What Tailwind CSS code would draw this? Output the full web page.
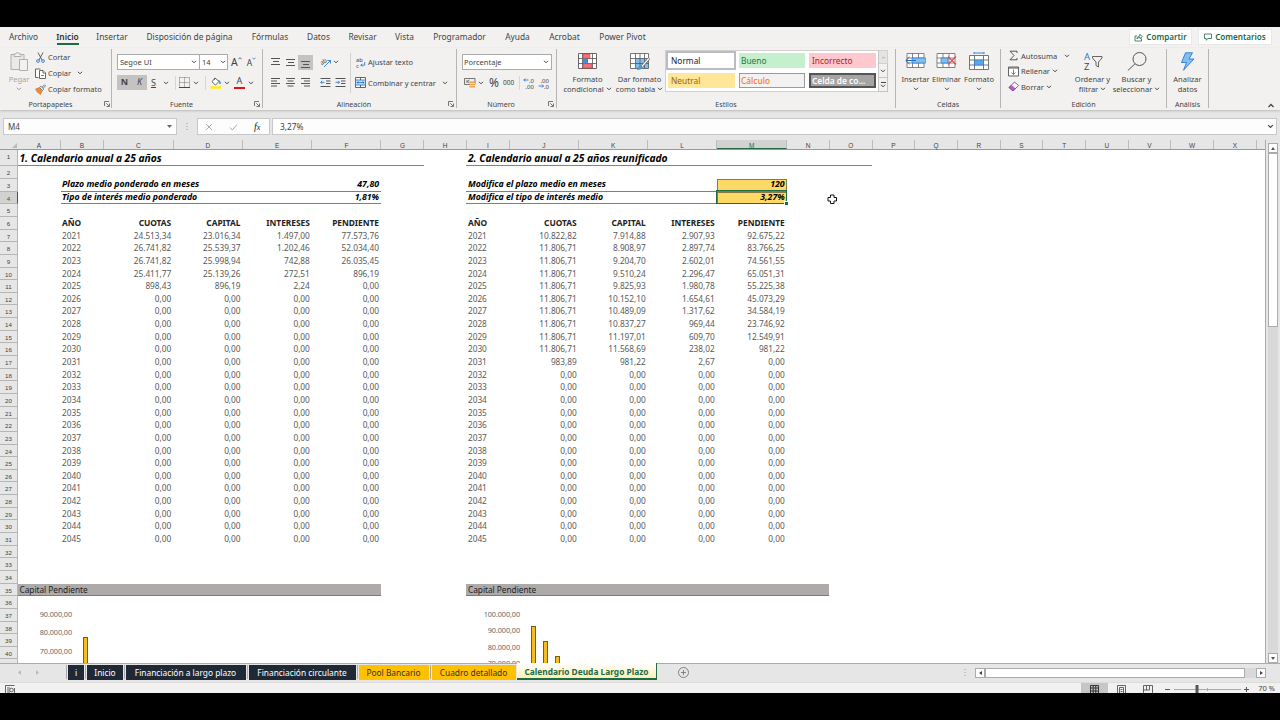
<!DOCTYPE html>
<html lang="es">
<head>
  <meta charset="UTF-8">
  <meta name="viewport" content="width=device-width, initial-scale=1.0">
  <title>Calendario Deuda Largo Plazo</title>
  <script src="https://cdn.jsdelivr.net/npm/@tailwindcss/browser@4"></script>
</head>
<body class="bg-black overflow-hidden">
<svg class="hidden">
  <symbol id="chev" viewBox="0 0 6 4"><path d="M1 .8 3 2.8 5 .8" fill="none" stroke="#444" stroke-width="1"/></symbol>
  <symbol id="launch" viewBox="0 0 6 6"><path d="M.5 5V.5H5M2.3 2.3 5 5M5.5 2.5v3h-3" fill="none" stroke="#555" stroke-width=".8"/></symbol>
</svg>
<div class="w-[1280px] h-[720px] pt-[27px] pb-[27px] font-['Noto_Sans',sans-serif] text-[#444] text-[7.5px] leading-[10px] whitespace-nowrap">
<div class="h-[666px] flex flex-col bg-[#e6e6e6]">

  <!-- Pestañas de la cinta -->
  <header class="h-[21px] shrink-0 flex bg-[#f2f1f0] text-[8.35px]">
    <nav class="flex items-center h-[20px] text-center">
      <a class="w-[47px]">Archivo</a>
      <a class="w-[41px] h-full flex flex-col items-center pt-[5px] font-semibold text-[#333] text-[8.35px]">Inicio<span class="w-[22px] h-[2px] bg-[#1e6b43] mt-[1px]"></span></a>
      <a class="w-[48px]">Insertar</a>
      <a class="w-[107px]">Disposición de página</a>
      <a class="w-[54px]">Fórmulas</a>
      <a class="w-[43px]">Datos</a>
      <a class="w-[45px]">Revisar</a>
      <a class="w-[39px]">Vista</a>
      <a class="w-[71px]">Programador</a>
      <a class="w-[45px]">Ayuda</a>
      <a class="w-[49px]">Acrobat</a>
      <a class="w-[67px]">Power Pivot</a>
    </nav>
    <div class="ml-auto mr-[8px] mt-[2px] flex gap-[6px] font-semibold text-[#1e6b43] text-[8.1px]">
      <button class="w-[63px] h-[16px] bg-white border border-[#e8e8e8] flex items-center justify-center gap-[3px]">
        <svg class="w-[9px] h-[9px]" viewBox="0 0 9 9" fill="none" stroke="#1e6b43" stroke-width=".8"><path d="M3 3H1v5h6.5V5.5M3 6c0-2 1-3 3-3V1.3L8.3 3.6 6 5.8V4.4C4.500 4.400 3.600 5 3 6Z"/></svg>Compartir
      </button>
      <button class="w-[74px] h-[16px] bg-white border border-[#e8e8e8] flex items-center justify-center gap-[3px]">
        <svg class="w-[8px] h-[8px]" viewBox="0 0 8 8" fill="none" stroke="#1e6b43" stroke-width=".8"><path d="M.5 1h7v4.500H4L2.200 7.200V5.500H.5Z"/></svg>Comentarios
      </button>
    </div>
  </header>

  <!-- Cinta -->
  <section class="h-[62px] shrink-0 flex bg-[#f2f1f0] shadow-[0_1px_2px_#bbb] pt-[1px] relative">
    <!-- Portapapeles -->
    <div class="w-[112px] h-[59px] border-r border-[#b5b5b5] flex flex-col">
      <div class="h-[50px] flex">
        <div class="w-[35px] pl-[3px] flex flex-col items-center text-[#a6a6a6] pt-[2px]">
          <svg class="w-[20px] h-[22px]" viewBox="0 0 20 22" fill="#f2f1f0" stroke="#b0aeac" stroke-width="1"><path d="M2 3.500h13v15H2Z" fill="#ebe9e7"/><path d="M5 5.500V3h2a1.500 1.500 0 0 1 3 0h2v2.500Z"/><path d="M10.500 8.500h8v11h-8Z"/></svg>
          <span class="mt-[1px]">Pegar</span>
          <svg class="w-[6px] h-[4px] opacity-50 mt-[3px]"><use href="#chev"/></svg>
        </div>
        <div class="flex flex-col">
          <div class="h-[16px] flex items-center"><svg class="w-[11px] h-[11px] mr-[2px]" viewBox="0 0 11 11" fill="none"><path d="M3 .5 7 8M8 .5 4 8" stroke="#555" stroke-width=".9"/><circle cx="3" cy="9" r="1.400" stroke="#2b7cd3" stroke-width=".9"/><circle cx="8" cy="9" r="1.400" stroke="#2b7cd3" stroke-width=".9"/></svg>Cortar</div>
          <div class="h-[16px] flex items-center"><svg class="w-[11px] h-[11px] mr-[2px]" viewBox="0 0 11 11" fill="#fff" stroke="#555" stroke-width=".9"><path d="M3.500 9.500H.5V1h5"/><path d="M4.500 2.500H8L10.500 5v5.500h-6Z"/><path d="M8 2.500V5h2.500"/><path d="M6 7.500h3" stroke="#2b7cd3"/></svg>Copiar<svg class="w-[6px] h-[4px] ml-[6px]"><use href="#chev"/></svg></div>
          <div class="h-[16px] flex items-center"><svg class="w-[11px] h-[11px] mr-[2px]" viewBox="0 0 11 11"><path d="M.5 5 4 3.800 7 7.200 5.500 10.500Q2 9 .5 5Z" fill="#f08a3c" stroke="#d86f1c" stroke-width=".6"/><path d="M4.500 3.500 6 2.300 8.700 5 7.500 6.500ZM7 3.300 9.500.8l1 1L8.200 4.300" fill="#fff" stroke="#555" stroke-width=".8"/></svg>Copiar formato</div>
        </div>
      </div>
      <div class="h-[10px] flex items-center text-[7.1px] pt-[2px]"><span class="w-[101px] text-center">Portapapeles</span><svg class="w-[6px] h-[6px] ml-[3px]"><use href="#launch"/></svg></div>
    </div>

    <!-- Fuente -->
    <div class="w-[151px] h-[59px] border-r border-[#b5b5b5] flex flex-col">
      <div class="h-[50px] pl-[5px] pt-[5px]">
        <div class="flex items-center h-[16px]">
          <div class="w-[83px] h-[16px] bg-white border border-[#ababab] flex items-center justify-between pl-[2px] pr-[2px]">Segoe UI<svg class="w-[6px] h-[4px]"><use href="#chev"/></svg></div>
          <div class="w-[28px] h-[16px] bg-white border border-l-0 border-[#ababab] flex items-center justify-between pl-[2px] pr-[1px]">14<svg class="w-[6px] h-[4px]"><use href="#chev"/></svg></div>
          <span class="ml-[3px] text-[10.5px]">A</span><svg class="w-[4px] h-[3px] mb-[7px]" viewBox="0 0 4 3"><path d="M.3 2.300 2 .6l1.700 1.700" fill="none" stroke="#444" stroke-width=".8"/></svg>
          <span class="ml-[5px] text-[8.5px] mt-[1px]">A</span><svg class="w-[4px] h-[3px] mb-[7px]" viewBox="0 0 4 3"><path d="M.3 .6 2 2.300 3.700 .6" fill="none" stroke="#2b7cd3" stroke-width=".8"/></svg>
        </div>
        <div class="flex items-center h-[15px] mt-[5px] text-[9px]">
          <span class="w-[15px] h-[15px] bg-[#c5c3c2] text-center leading-[14px] font-bold">N</span>
          <span class="w-[15px] h-[15px] bg-[#c5c3c2] text-center leading-[14px] italic">K</span>
          <span class="w-[13px] text-center underline">S</span>
          <svg class="w-[6px] h-[4px] ml-[3px]"><use href="#chev"/></svg>
          <span class="w-px h-[14px] bg-[#d8d6d4] ml-[6px]"></span>
          <svg class="w-[11px] h-[11px] ml-[3px]" viewBox="0 0 11 11" stroke="#666" fill="none" stroke-width=".9"><path d="M.5.5h10M.5.5v10M10.500.5v10M5.500.5v10M.5 5.500h10" stroke-dasharray="1 1"/><path d="M0 10.500h11" stroke="#333"/></svg>
          <svg class="w-[6px] h-[4px] ml-[3px]"><use href="#chev"/></svg>
          <span class="w-px h-[14px] bg-[#d8d6d4] ml-[6px]"></span>
          <svg class="w-[12px] h-[12px] ml-[4px]" viewBox="0 0 12 12"><path d="M5 1 2 4.800 5.500 8 9 4.500Z" fill="#fff" stroke="#555" stroke-width=".9"/><path d="M4.500 3V.8" stroke="#555" stroke-width=".8"/><path d="M8.500 3.500Q10.500 4.500 10 7" fill="none" stroke="#2b7cd3" stroke-width="1.200"/><path d="M.5 9.300h10.500v2.400H.5Z" fill="#ffee00"/></svg>
          <svg class="w-[6px] h-[4px] ml-[2px]"><use href="#chev"/></svg>
          <span class="w-[11px] h-[13px] ml-[4px] border-b-[2.5px] border-[#e81010] text-center leading-[10px]">A</span>
          <svg class="w-[6px] h-[4px] ml-[3px]"><use href="#chev"/></svg>
        </div>
      </div>
      <div class="h-[10px] flex items-center text-[7.1px] pt-[2px]"><span class="w-[139px] text-center">Fuente</span><svg class="w-[6px] h-[6px] ml-[3px]"><use href="#launch"/></svg></div>
    </div>

    <!-- Alineación -->
    <div class="w-[194px] h-[59px] border-r border-[#b5b5b5] flex flex-col">
      <div class="h-[50px] flex">
        <div class="w-[87px] pl-[5px] pt-[5px]">
          <div class="flex h-[16px] items-center">
            <svg class="w-[15px] h-[15px]" viewBox="0 0 15 15" stroke="#555"><path d="M3 3.500h9M5 6.500h6M3 9.500h9"/></svg>
            <svg class="w-[15px] h-[15px]" viewBox="0 0 15 15" stroke="#555"><path d="M3 4.500h9M5 7.500h6M3 10.500h9"/></svg>
            <svg class="w-[15px] h-[15px] bg-[#c5c3c2]" viewBox="0 0 15 15" stroke="#555"><path d="M3 6.500h9M5 9.500h6M3 12.500h9"/></svg>
            <svg class="w-[12px] h-[12px] ml-[7px]" viewBox="0 0 12 12" fill="none"><text x="0" y="8" font-size="6" fill="#444" transform="rotate(-30 3 6)">ab</text><path d="M4 11 10.500 4.500M7.500 4.500h3v3" stroke="#2b7cd3" stroke-width=".9"/></svg>
            <svg class="w-[6px] h-[4px] ml-[1px]"><use href="#chev"/></svg>
          </div>
          <div class="flex h-[15px] items-center mt-[5px]">
            <svg class="w-[15px] h-[15px]" viewBox="0 0 15 15" stroke="#555"><path d="M3 3.500h9M3 6h6M3 8.500h9M3 11h6"/></svg>
            <svg class="w-[15px] h-[15px]" viewBox="0 0 15 15" stroke="#555"><path d="M3 3.500h9M4.500 6h6M3 8.500h9M4.500 11h6"/></svg>
            <svg class="w-[15px] h-[15px]" viewBox="0 0 15 15" stroke="#555"><path d="M3 3.500h9M6 6h6M3 8.500h9M6 11h6"/></svg>
            <svg class="w-[11px] h-[11px] ml-[7px]" viewBox="0 0 11 11" fill="none" stroke="#555"><path d="M.5 1.500h10M6 4h4.500M6 6.500h4.500M.5 9.500h10"/><path d="M4.500 5.300H.8M2.200 3.800.7 5.300l1.500 1.500" stroke="#2b7cd3" stroke-width=".9"/></svg>
            <svg class="w-[11px] h-[11px] ml-[4px]" viewBox="0 0 11 11" fill="none" stroke="#555"><path d="M.5 1.500h10M6 4h4.500M6 6.500h4.500M.5 9.500h10"/><path d="M.5 5.300h4M3 3.800l1.500 1.500L3 6.800" stroke="#2b7cd3" stroke-width=".9"/></svg>
          </div>
        </div>
        <div class="w-px h-[40px] bg-[#d4d2d0] mt-[4px]"></div>
        <div class="pl-[4px] pt-[5px]">
          <div class="flex h-[16px] items-center">
            <svg class="w-[10px] h-[13px] ml-[1px] mr-[2px]" viewBox="0 0 10 13" fill="none"><text x="0" y="6" font-size="6" fill="#444">ab</text><text x="0" y="11.500" font-size="6" fill="#444">c</text><path d="M8.700 6v3.200H4.800M6.300 7.700 4.800 9.200l1.500 1.500" stroke="#2b7cd3" stroke-width=".9"/></svg>Ajustar texto
          </div>
          <div class="flex h-[15px] items-center mt-[5px]">
            <svg class="w-[11px] h-[11px] mr-[2px]" viewBox="0 0 11 11" fill="none" stroke="#555" stroke-width=".9"><path d="M.5.5h10v10H.5Z" fill="#fff"/><path d="M.5 3h10v5H.5Z" fill="#c8e2f7" stroke="#2b7cd3"/><path d="M5.500.5V3M5.500 8v2.500"/><path d="M2 5.500h7M3.300 4.200 2 5.500l1.300 1.300M7.700 4.200 9 5.500 7.700 6.800" stroke="#1f6fbf" stroke-width=".8"/></svg>Combinar y centrar<svg class="w-[6px] h-[4px] ml-[6px]"><use href="#chev"/></svg>
          </div>
        </div>
      </div>
      <div class="h-[10px] flex items-center text-[7.1px] pt-[2px]"><span class="w-[182px] text-center">Alineación</span><svg class="w-[6px] h-[6px] ml-[3px]"><use href="#launch"/></svg></div>
    </div>

    <!-- Número -->
    <div class="w-[100px] h-[59px] border-r border-[#b5b5b5] flex flex-col">
      <div class="h-[50px] pl-[5px] pt-[5px]">
        <div class="w-[90px] h-[16px] bg-white border border-[#ababab] flex items-center justify-between pl-[1px] pr-[2px]">Porcentaje<svg class="w-[6px] h-[4px]"><use href="#chev"/></svg></div>
        <div class="flex items-center h-[15px] mt-[5px]">
          <svg class="w-[12px] h-[11px] ml-[2px]" viewBox="0 0 12 11"><path d="M.5 1.500h10.500v6H.5Z" fill="#eee" stroke="#666" stroke-width=".9"/><path d="M3 3v3M5.500 3 3.500 4.500l2 1.500" fill="none" stroke="#555" stroke-width=".8"/><path d="M5.500 4.500h5.500v6H5.500Z" fill="#f0a04a"/><path d="M5.500 6.500h5.500M5.500 8.500h5.500" stroke="#fff" stroke-width=".6"/></svg>
          <svg class="w-[6px] h-[4px] ml-[2px]"><use href="#chev"/></svg>
          <span class="ml-[5px] w-[11px] text-[12px] leading-[14px]">%</span>
          <span class="ml-[3px] w-[12px] text-[6.5px]">000</span>
          <span class="w-px h-[14px] bg-[#d8d6d4] ml-[4px]"></span>
          <svg class="w-[12px] h-[12px] ml-[3px]" viewBox="0 0 12 12"><text x="6" y="5.500" font-size="6" fill="#444">,0</text><text x="2.500" y="11.500" font-size="6" fill="#444">,00</text><path d="M5.500 3H.8M2.300 1.500.8 3l1.500 1.500" fill="none" stroke="#2b7cd3" stroke-width=".9"/></svg>
          <svg class="w-[12px] h-[12px] ml-[3px]" viewBox="0 0 12 12"><text x="2.500" y="5.500" font-size="6" fill="#444">,00</text><text x="6" y="11.500" font-size="6" fill="#444">,0</text><path d="M.5 9h5M4 7.500 5.500 9 4 10.500" fill="none" stroke="#2b7cd3" stroke-width=".9"/></svg>
        </div>
      </div>
      <div class="h-[10px] flex items-center text-[7.1px] pt-[2px]"><span class="w-[88px] text-center">Número</span><svg class="w-[6px] h-[6px] ml-[3px]"><use href="#launch"/></svg></div>
    </div>

    <!-- Estilos -->
    <div class="w-[339px] h-[59px] border-r border-[#b5b5b5] flex flex-col">
      <div class="h-[50px] flex">
        <div class="w-[57px] ml-[2px] flex flex-col items-center pt-[4px]">
          <svg class="w-[19px] h-[16px] mb-[5px]" viewBox="0 0 19 16"><path d="M.5.5h18v15H.5Z" fill="#fff" stroke="#555" stroke-width=".9"/><path d="M.5 5.500h18M.5 10.500h18M4.500.5v15M9.500.5v15M14.500.5v15" stroke="#555" stroke-width=".8"/><path d="M5 1h7v4.300H5ZM5 10.700h9v4.300H5Z" fill="#f4727c" stroke="#c33" stroke-width=".5"/><path d="M5 5.700h4v4.500H5Z" fill="#3f8fdd"/></svg>
          <span>Formato</span>
          <span class="flex items-center gap-[2px]">condicional<svg class="w-[6px] h-[4px]"><use href="#chev"/></svg></span>
        </div>
        <div class="w-[47px] flex flex-col items-center pt-[4px]">
          <svg class="w-[20px] h-[18px] mb-[3px]" viewBox="0 0 20 18"><path d="M.5.5h18v15H.5Z" fill="#fff"/><path d="M6 5.500h12.500v10H6Z" fill="#83beec"/><path d="M.5.5h18v15H.5ZM.5 5.500h18M.5 10.500h18M5.500.5v15M10 .5v15M14.500.5v15" fill="none" stroke="#555" stroke-width=".8"/><path d="M18.500 4.500 11 13l1.500 1.300L19.700 6Z" fill="#fff" stroke="#555" stroke-width=".7"/><path d="M10.500 13q-3 .5-3.500 4 4.500 0 5.200-2.500Z" fill="#3f9be0"/></svg>
          <span>Dar formato</span>
          <span class="flex items-center gap-[2px]">como tabla<svg class="w-[6px] h-[4px]"><use href="#chev"/></svg></span>
        </div>
        <div class="w-[223px] h-[42px] mt-[1px] ml-[2px] flex bg-white border border-[#d2d0ce] text-[8.35px]">
          <div class="flex flex-col gap-[3px]">
            <div class="flex items-center h-[19px] gap-[3px]">
              <span class="w-[70px] h-[19px] border-2 border-[#b9bcc4] pl-[3px] leading-[15px] text-[#222]">Normal</span>
              <span class="w-[66px] h-[15px] bg-[#c6efce] pl-[2px] leading-[15px] text-[#1e7b2e]">Bueno</span>
              <span class="w-[67px] h-[15px] bg-[#ffc7ce] pl-[3px] leading-[15px] text-[#b0202c] ml-[1px]">Incorrecto</span>
            </div>
            <div class="flex items-center h-[15px] gap-[4px]">
              <span class="w-[67px] h-[15px] bg-[#ffe699] pl-[3px] leading-[15px] text-[#9c6500] ml-[2px]">Neutral</span>
              <span class="w-[66px] h-[15px] bg-[#f2f2f2] border border-[#9a9a9a] pl-[1px] leading-[13px] text-[#fa7d00] font-medium">Cálculo</span>
              <span class="w-[67px] h-[15px] bg-[#a5a5a5] border-2 border-double border-[#555] pl-[1px] leading-[11px] text-white font-semibold">Celda de co...</span>
            </div>
          </div>
          <div class="ml-auto w-[10px] flex flex-col border-l border-[#c6c4c2] bg-[#f2f1f0] -my-px -mr-px">
            <span class="h-[14px] border-y border-r border-[#d2d0ce] bg-[#e6e4e2] flex items-center justify-center"><svg class="w-[5px] h-[3px] rotate-180 opacity-50"><use href="#chev"/></svg></span>
            <span class="h-[13px] border-r border-[#c6c4c2] flex items-center justify-center"><svg class="w-[6px] h-[4px]"><use href="#chev"/></svg></span>
            <span class="h-[15px] border border-l-0 border-[#c6c4c2] flex flex-col items-center justify-center"><i class="w-[5px] h-px bg-[#444] mb-[1px]"></i><svg class="w-[6px] h-[4px]"><use href="#chev"/></svg></span>
          </div>
        </div>
      </div>
      <div class="h-[10px] w-[338px] text-center text-[7.1px] pt-px">Estilos</div>
    </div>

    <!-- Celdas -->
    <div class="w-[105px] h-[59px] border-r border-[#b5b5b5] flex flex-col">
      <div class="h-[50px] flex pl-[4px] pt-[3px]">
        <div class="w-[31px] flex flex-col items-center">
          <svg class="w-[21px] h-[17px] mb-[5px]" viewBox="0 0 21 17"><path d="M2 1.500h17v14H2Z" fill="#fff"/><path d="M2 1.500h17v14H2ZM2 6h17M2 11h17M7.500 1.500v14M13.500 1.500v14" fill="none" stroke="#666" stroke-width=".8"/><path d="M7 6h14v5H7Z" fill="#83beec" stroke="#2b7cd3" stroke-width=".7"/><path d="M4.500 5 .8 8.500l3.700 3.500M1 8.500h10" fill="none" stroke="#1f6fbf"/></svg>
          <span>Insertar</span><svg class="w-[6px] h-[4px] mt-[3px]"><use href="#chev"/></svg>
        </div>
        <div class="w-[31px] flex flex-col items-center">
          <svg class="w-[21px] h-[17px] mb-[5px]" viewBox="0 0 21 17"><path d="M1 1.500h18v14H1Z" fill="#fff"/><path d="M1 1.500h18v14H1ZM1 6h18M1 11h18M7 1.500v14M13 1.500v14" fill="none" stroke="#666" stroke-width=".8"/><path d="M5 6h7v5H5Z" fill="#83beec" stroke="#2b7cd3" stroke-width=".7"/><path d="m12 4.500 8 8m0-8-8 8" stroke="#e8484f" stroke-width="1.100"/></svg>
          <span>Eliminar</span><svg class="w-[6px] h-[4px] mt-[3px]"><use href="#chev"/></svg>
        </div>
        <div class="w-[34px] flex flex-col items-center">
          <svg class="w-[20px] h-[19px] mb-[3px]" viewBox="0 0 20 19"><path d="M.5 3.500h19v14H.5Z" fill="#fff"/><path d="M.5 3.500h19v14H.5ZM.5 8h19M.5 13h19M5.500 3.500v14M14.500 3.500v14" fill="none" stroke="#555" stroke-width=".8"/><path d="M5.500 8h9v5h-9Z" fill="#5aa7e6" stroke="#2b7cd3" stroke-width=".6"/><path d="M5 1h10M5 0v2M15 0v2" stroke="#2b7cd3" stroke-width=".9"/></svg>
          <span>Formato</span><svg class="w-[6px] h-[4px] mt-[3px]"><use href="#chev"/></svg>
        </div>
      </div>
      <div class="h-[10px] text-center text-[7.1px] pt-px">Celdas</div>
    </div>

    <!-- Edición -->
    <div class="w-[166px] h-[59px] border-r border-[#b5b5b5] flex flex-col">
      <div class="h-[50px] flex">
        <div class="w-[71px] pl-[7px] -mt-px">
          <div class="h-[15px] flex items-center"><svg class="w-[11px] h-[11px] mr-[2px]" viewBox="0 0 11 11" fill="none" stroke="#444" stroke-width=".9"><path d="M9 3V1.200H2l4 4.300-4 4.300h7V8"/></svg>Autosuma<svg class="w-[6px] h-[4px] ml-[7px]"><use href="#chev"/></svg></div>
          <div class="h-[16px] flex items-center"><svg class="w-[11px] h-[11px] mr-[2px]" viewBox="0 0 11 11" fill="none"><path d="M.5 1h10v9H.5Z" fill="#fff" stroke="#555" stroke-width=".9"/><path d="M.5 2h10" stroke="#555"/><path d="M5.500 3.500v5M3.500 6.500l2 2 2-2" stroke="#2b7cd3" stroke-width=".9"/></svg>Rellenar<svg class="w-[6px] h-[4px] ml-[2px]"><use href="#chev"/></svg></div>
          <div class="h-[15px] flex items-center"><svg class="w-[11px] h-[11px] mr-[2px]" viewBox="0 0 11 11"><path d="M6.500 1 10.500 4.500 5 10 1 6.500Z" fill="#fff" stroke="#8a3fa0" stroke-width=".9"/><path d="M3.300 4.200 7.300 7.800 5 10 1 6.500Z" fill="#b55fc9" stroke="#8a3fa0" stroke-width=".7"/></svg>Borrar<svg class="w-[6px] h-[4px] ml-[2px]"><use href="#chev"/></svg></div>
        </div>
        <div class="w-[41px] flex flex-col items-center pt-[3px]">
          <svg class="w-[20px] h-[19px] mb-[3px]" viewBox="0 0 20 19" fill="none"><text x="1" y="8" font-size="9.500" fill="#2b7cd3">A</text><text x="1" y="17.500" font-size="9.500" fill="#444">Z</text><path d="M9.500 4.500h9.500v1.500l-3.500 4v5l-2.500-1.500V10L9.500 6Z" stroke="#555" stroke-width=".9"/></svg>
          <span>Ordenar y</span>
          <span class="flex items-center gap-[2px]">filtrar<svg class="w-[6px] h-[4px]"><use href="#chev"/></svg></span>
        </div>
        <div class="w-[47px] flex flex-col items-center pt-[3px]">
          <svg class="w-[20px] h-[19px] mb-[3px]" viewBox="0 0 20 19" fill="none" stroke="#555"><circle cx="12.500" cy="7" r="6.500"/><path d="M8 11.800 .8 18.500"/></svg>
          <span>Buscar y</span>
          <span class="flex items-center gap-[2px]">seleccionar<svg class="w-[6px] h-[4px]"><use href="#chev"/></svg></span>
        </div>
      </div>
      <div class="h-[10px] text-center text-[7.1px] pt-px">Edición</div>
    </div>

    <!-- Análisis -->
    <div class="w-[42px] h-[59px] border-r border-[#b5b5b5] flex flex-col items-center">
      <div class="h-[50px] flex flex-col items-center pt-[3px]">
        <svg class="w-[15px] h-[19px] mb-[3px]" viewBox="0 0 15 19"><path d="M5.500.8h7L9 7h5L3.500 18.200 6.500 10.500H1.500Z" fill="#83beec" stroke="#2b7cd3" stroke-width=".9"/></svg>
        <span>Analizar</span><span>datos</span>
      </div>
      <div class="h-[10px] text-[7.1px] pt-px">Análisis</div>
    </div>
    <svg class="w-[8px] h-[5px] ml-auto mr-[5px] mt-[54px] rotate-180"><use href="#chev"/></svg>
  </section>

  <!-- Barra de fórmulas -->
  <section class="h-[30px] shrink-0 pt-[8px] flex items-start text-[8.35px] leading-[15px]">
    <div class="ml-[3px] w-[174px] h-[17px] bg-[#fdfdfd] border border-[#c8c8c8] pl-[4px] pr-[4px] flex items-center justify-between text-[8px]">M4<svg class="w-[5px] h-[3px]" viewBox="0 0 5 3"><path d="M0 0h5L2.500 3Z" fill="#666"/></svg></div>
    <svg class="w-[2px] h-[8px] ml-[9px] mt-[5px]" viewBox="0 0 2 8"><path d="M1 0v8" stroke="#999" stroke-dasharray="1 2"/></svg>
    <div class="ml-[9px] w-[73px] h-[17px] bg-[#fdfdfd] border border-[#c8c8c8] flex items-center">
      <svg class="w-[8px] h-[8px] ml-[7px]" viewBox="0 0 8 8" stroke="#aaa"><path d="m1 1 6 6m0-6-6 6"/></svg>
      <svg class="w-[9px] h-[8px] ml-[16px]" viewBox="0 0 9 8" fill="none" stroke="#aaa"><path d="M1 4.500 3.200 7 8 1.500"/></svg>
      <span class="ml-[16px] italic text-[10px] font-['Liberation_Serif',serif] text-[#222]">f<span class="text-[8px]">x</span></span>
    </div>
    <div class="ml-[2px] w-[1005px] h-[17px] bg-[#fdfdfd] border border-[#c8c8c8] pl-[7px] pr-[2px] flex items-center justify-between">3,27%<svg class="w-[7px] h-[5px]"><use href="#chev"/></svg></div>
  </section>

  <!-- Hoja -->
  <main class="h-[523px] shrink-0 flex">
    <div class="w-[1266px] h-full overflow-hidden relative bg-white border-r border-[#ababab]">
      <div id="cabecera" class="h-[10px] flex bg-[#e6e6e6] border-b border-[#9a9a9a] text-[6.5px] leading-[11px] text-[#444] font-['Liberation_Sans',sans-serif]"></div>
      <div id="filas" class="text-[8.3px] tracking-[-0.03px]"></div>

      <!-- gráficos flotantes -->
      <div class="absolute left-[18px] top-[457px] w-[363px] h-[80px]">
        <div class="w-[54px] pt-[12px] flex flex-col text-right text-[7.3px] leading-[10px] gap-[8.400px] tracking-[-0.1px] text-[#666]"><span>90.000,00</span><span>80.000,00</span><span>70.000,00</span></div>
        <div class="absolute left-[65px] top-[40px] w-[5px] h-[60px] bg-[#f5bd1f] border border-[#7a5c10]"></div>
      </div>
      <div class="absolute left-[466px] top-[457px] w-[363px] h-[80px]">
        <div class="w-[54px] pt-[12px] flex flex-col text-right text-[7.3px] leading-[10px] gap-[6.400px] tracking-[-0.1px] text-[#666]"><span>100.000,00</span><span>90.000,00</span><span>80.000,00</span><span>70.000,00</span></div>
        <div class="absolute left-[65px] top-[29px] w-[5px] h-[60px] bg-[#f5bd1f] border border-[#7a5c10]"></div>
        <div class="absolute left-[77px] top-[44px] w-[5px] h-[60px] bg-[#f5bd1f] border border-[#7a5c10]"></div>
        <div class="absolute left-[89px] top-[59px] w-[5px] h-[60px] bg-[#f5bd1f] border border-[#7a5c10]"></div>
      </div>

      <!-- celda activa y cursor -->
      <div class="absolute left-[716px] top-[50px] w-[71px] h-[14px] border border-[#1e6b43]"><i class="absolute -right-[2px] -bottom-[2px] w-[4px] h-[4px] bg-[#1e6b43] border-l border-t border-white"></i></div>
      <svg class="absolute left-[827px] top-[54px] w-[11px] h-[11px]" viewBox="0 0 11 11"><path d="M3.500 1h3.500v2.500h2.500V7H7v2.500H3.500V7H1V3.500h2.500Z" fill="#fff" stroke="#111"/></svg>
    </div>
    <div class="w-[10px] h-full ml-[2px] pt-[3px] flex flex-col">
      <span class="h-[10px] bg-white border border-[#ababab] flex items-center justify-center"><svg class="w-[4px] h-[3px]" viewBox="0 0 4 3"><path d="M0 3h4L2 0Z" fill="#555"/></svg></span>
      <span class="h-[174px] bg-white border border-[#ababab]"></span>
      <span class="flex-1 bg-[#d9d9d9]"></span>
      <span class="h-[10px] bg-white border border-[#ababab] flex items-center justify-center"><svg class="w-[4px] h-[3px]" viewBox="0 0 4 3"><path d="M0 0h4L2 3Z" fill="#555"/></svg></span>
    </div>
  </main>

  <!-- Hojas del libro -->
  <nav class="h-[19px] shrink-0 flex border-t border-[#ababab] text-[8.37px] leading-[15px] text-center pt-[1px]">
    <div class="w-[66px] flex gap-[15px] pl-[18px] pt-[5px]">
      <svg class="w-[3px] h-[5px]" viewBox="0 0 3 5"><path d="M3 0v5L0 2.500Z" fill="#bbb"/></svg>
      <svg class="w-[3px] h-[5px]" viewBox="0 0 3 5"><path d="M0 0v5l3-2.500Z" fill="#bbb"/></svg>
    </div>
    <div class="w-px h-[14px] bg-[#aaa]"></div>
    <div class="w-[16px] h-[15px] bg-[#1f2935] text-white ml-[1px]">i</div>
    <div class="w-px h-[14px] bg-[#aaa] ml-[1px]"></div>
    <div class="w-[36px] h-[15px] bg-[#1f2935] text-white ml-[1px]">Inicio</div>
    <div class="w-px h-[14px] bg-[#aaa] ml-[1px]"></div>
    <div class="w-[120px] h-[15px] bg-[#1f2935] text-white ml-[1px] pr-[1px]">Financiación a largo plazo</div>
    <div class="w-px h-[14px] bg-[#aaa] ml-[1px]"></div>
    <div class="w-[107px] h-[15px] bg-[#1f2935] text-white ml-[1px] pr-[1px]">Financiación circulante</div>
    <div class="w-px h-[14px] bg-[#aaa] ml-[1px]"></div>
    <div class="w-[70px] h-[15px] bg-[#ffc000] text-[#333] ml-[1px] pr-[1px]">Pool Bancario</div>
    <div class="w-px h-[14px] bg-[#aaa] ml-[1px]"></div>
    <div class="w-[84px] h-[15px] bg-[#ffc000] text-[#333] ml-[1px] pr-[1px]">Cuadro detallado</div>
    <div class="w-[140px] h-[17px] -mt-[2px] pt-[1px] bg-linear-to-b from-white to-[#fdeeb5] border-b-2 border-r border-[#1e6b43] text-[#1e6b43] font-bold text-[8.35px] ml-[1px]">Calendario Deuda Largo Plazo</div>
    <svg class="w-[11px] h-[11px] ml-[21px] mt-[2px]" viewBox="0 0 11 11" fill="none" stroke="#777" stroke-width=".9"><circle cx="5.500" cy="5.500" r="5"/><path d="M5.500 3v5M3 5.500h5"/></svg>
    <svg class="w-[2px] h-[8px] ml-auto mt-[4px]" viewBox="0 0 2 8"><path d="M1 0v8" stroke="#999" stroke-dasharray="1 2"/></svg>
    <div class="w-[291px] h-[10px] ml-[9px] mr-[14px] mt-[3px] flex bg-[#d9d9d9]">
      <span class="w-[10px] bg-white border border-[#ababab] flex items-center justify-center"><svg class="w-[3px] h-[4px]" viewBox="0 0 3 4"><path d="M3 0v4L0 2Z" fill="#444"/></svg></span>
      <span class="w-[260px] bg-white border border-[#ababab]"></span>
      <span class="w-[10px] ml-auto bg-white border border-[#ababab] flex items-center justify-center"><svg class="w-[3px] h-[4px]" viewBox="0 0 3 4"><path d="M0 0v4l3-2Z" fill="#444"/></svg></span>
    </div>
  </nav>

  <!-- Barra de estado -->
  <footer class="h-[11px] shrink-0 flex items-end bg-[#f2f1f0] overflow-hidden border-t border-[#dcdcdc]">
    <svg class="w-[10px] h-[8px] ml-[5px]" viewBox="0 0 10 8" fill="none" stroke="#555" stroke-width=".9"><path d="M.5.5h9M.5.5v7.500M9.500 3v5M2 3h3M2 5h2M2 7h3"/><circle cx="6.500" cy="5" r="1.800"/></svg>
    <div class="ml-auto w-[27px] h-full bg-[#c8c6c4] flex items-end justify-center"><svg class="w-[9px] h-[8px]" viewBox="0 0 9 8" fill="none" stroke="#333"><path d="M.5 8V.5h8V8M3.200 0v8M5.800 0v8M0 3h9M0 6h9"/></svg></div>
    <svg class="w-[9px] h-[8px] ml-[9px]" viewBox="0 0 9 8" fill="none" stroke="#555" stroke-width=".9"><path d="M.5 8V.5h8V8M2.500 8V2.500h4V8M3.500 4.500h2M3.500 6.500h2"/></svg>
    <svg class="w-[10px] h-[8px] ml-[17px]" viewBox="0 0 10 8" fill="none" stroke="#555" stroke-width=".9"><path d="M.5 8V.5h9V8M3.500.5v4.500M6.500.5V5M.5 5h6"/></svg>
    <svg class="w-[84px] h-[8px] ml-[12px]" viewBox="0 0 84 8" fill="none" stroke="#555"><path d="M0 4.500h5M79 4.500h5M81.500 2v5"/><path d="M9 4.500h67M42.500 3v3" stroke="#aaa"/><path d="M31.500 1v7h1V1Z" stroke-width="2"/></svg>
    <span class="ml-[9px] mr-[5px] leading-[9px]">70 %</span>
  </footer>
</div>
</div>

<script>
  const anchos = [43, 43, 69.7, 69.3, 69.3, 69.2, 43, 42.5, 42.7, 69.5, 69, 69, 70, 42.7, 42.7, 42.7, 42.7, 42.7, 42.7, 42.7, 42.7, 42.7, 42.7, 42.7];
  const letras = "ABCDEFGHIJKLMNOPQRSTUVWX";

  const pagos1 = [
    ["24.513,34", "23.016,34", "1.497,00", "77.573,76"],
    ["26.741,82", "25.539,37", "1.202,46", "52.034,40"],
    ["26.741,82", "25.998,94", "742,88", "26.035,45"],
    ["25.411,77", "25.139,26", "272,51", "896,19"],
    ["898,43", "896,19", "2,24", "0,00"]
  ];
  const pagos2 = [
    ["10.822,82", "7.914,88", "2.907,93", "92.675,22"],
    ["11.806,71", "8.908,97", "2.897,74", "83.766,25"],
    ["11.806,71", "9.204,70", "2.602,01", "74.561,55"],
    ["11.806,71", "9.510,24", "2.296,47", "65.051,31"],
    ["11.806,71", "9.825,93", "1.980,78", "55.225,38"],
    ["11.806,71", "10.152,10", "1.654,61", "45.073,29"],
    ["11.806,71", "10.489,09", "1.317,62", "34.584,19"],
    ["11.806,71", "10.837,27", "969,44", "23.746,92"],
    ["11.806,71", "11.197,01", "609,70", "12.549,91"],
    ["11.806,71", "11.568,69", "238,02", "981,22"],
    ["983,89", "981,22", "2,67", "0,00"]
  ];

  const ceros = ["0,00", "0,00", "0,00", "0,00"];
  const celdas = {
    A1: "1. Calendario anual a 25 años", I1: "2. Calendario anual a 25 años reunificado",
    B3: "Plazo medio ponderado en meses", F3: "47,80", I3: "Modifica el plazo medio en meses", M3: "120",
    B4: "Tipo de interés medio ponderado", F4: "1,81%", I4: "Modifica el tipo de interés medio", M4: "3,27%",
    A35: "Capital Pendiente", I35: "Capital Pendiente"
  };
  ["AÑO", "CUOTAS", "CAPITAL", "INTERESES", "PENDIENTE"].forEach((t, i) => {
    celdas["BCDEF"[i] + 6] = t;
    celdas["IJKLM"[i] + 6] = t;
  });
  for (let i = 0; i < 25; i++) {
    const f = i + 7;
    celdas["B" + f] = celdas["I" + f] = 2021 + i;
    (pagos1[i] || ceros).forEach((v, c) => celdas["CDEF"[c] + f] = v);
    (pagos2[i] || ceros).forEach((v, c) => celdas["JKLM"[c] + f] = v);
  }

  function clases(l, f) {
    let c = "CDEFJKLM".includes(l) && f > 2 ? "pr-[2px] text-right " : "pl-[1.5px] ";
    if (f === 1) {
      c += "text-[10.25px] font-bold italic text-black ";
      if (!"HPQRSTUVWX".includes(l)) c += "border-b border-[#7f857f] ";
    } else if (f === 3 || f === 4) {
      c += "font-bold italic text-black text-[8.75px] ";
      if ("BCDEFIJKL".includes(l)) c += "border-b border-[#7f7f7f] ";
      if (l === "M") c += "bg-[#ffd966] outline outline-1 -outline-offset-1 outline-[#8a7a40] ";
    } else if (f === 6) {
      c += "font-bold text-[#222] text-[8.4px] ";
    } else if (f === 35) {
      c += "text-[#222] ";
      if ("ABCDEFIJKLMN".includes(l)) c += "bg-[#aeaaaa] border-b border-[#7d7a7a] ";
      if (l === "A" || l === "I") c += "relative z-10 ";
    } else {
      c += "text-[#5a5a5a] ";
    }
    return c;
  }

  let cab = "<span class='w-[18px] shrink-0 flex items-end justify-end pb-px pr-px'><svg class='w-[5px] h-[5px]' viewBox='0 0 5 5'><path d='M5 0v5H0Z' fill='#bbb'/></svg></span>";
  [...letras].forEach((l, i) => {
    cab += `<span class="shrink-0 text-center border-r border-[#bdbdbd] ${l === "M" ? "bg-[#d2d2d2] border-b border-b-[#1e6b43] text-[#1e6b43]" : ""}" style="width:${anchos[i]}px">${l}</span>`;
  });
  document.getElementById("cabecera").innerHTML = cab;

  let html = "";
  for (let f = 1; f <= 41; f++) {
    const alto = f === 1 ? 15.9 : f === 2 ? 13.2 : 12.646;
    // las filas 3 y 4 llevan el texto pegado arriba
    const linea = f === 1 ? 16.6 : f === 3 || f === 4 ? 10 : alto;
    html += `<div class="flex" style="height:${alto}px;line-height:${linea}px">`;
    html += `<span class="w-[18px] shrink-0 border-r border-b border-[#b5b5b5] text-center text-[6.2px] leading-[12px] tracking-normal font-['Liberation_Sans',sans-serif] pt-px ${f === 1 ? "pt-[3px]" : ""} ${f === 4 ? "bg-[#d2d2d2] text-[#1e6b43] border-r-[#1e6b43]" : "bg-[#e6e6e6] text-[#444]"}">${f}</span>`;
    [...letras].forEach((l, i) => {
      html += `<span class="shrink-0 ${clases(l, f)}" style="width:${i === 0 ? 42.5 : anchos[i]}px">${celdas[l + f] ?? ""}</span>`;
    });
    html += "</div>";
  }
  document.getElementById("filas").innerHTML = html;
</script>
</body>
</html>
